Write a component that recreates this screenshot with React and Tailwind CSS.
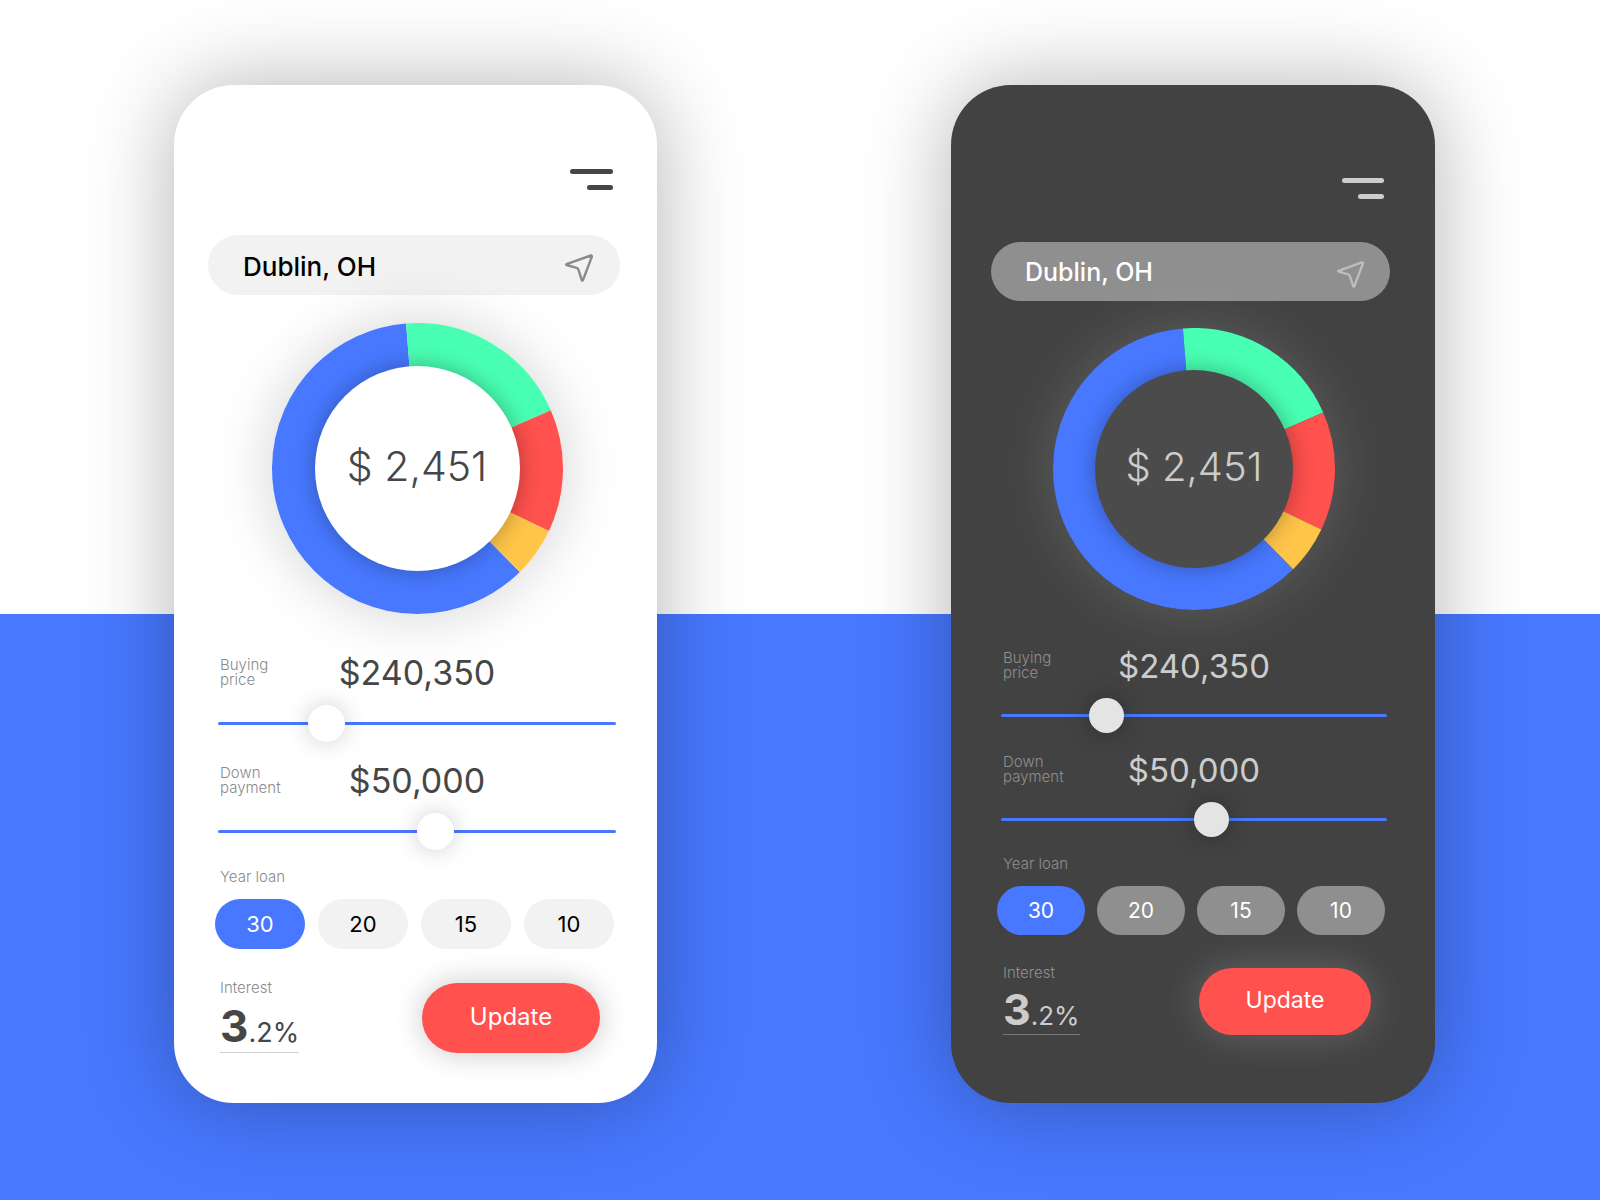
import { useState } from 'react'

const years = [30, 20, 15, 10]

// start and length are in degrees, clockwise from twelve o'clock
const slices = [
  { start: 135.3, length: 220.2, color: '#4778ff' },
  { start: -4.5, length: 70.9, color: '#49ffb3' },
  { start: 66.4, length: 49, color: '#ff514d' },
  { start: 115.4, length: 19.9, color: '#ffc549' },
]

const light = {
  card: 'max-w-[483px] bg-white pt-[84px] pb-[50px]',
  menu: 'mr-[44px]',
  barLong: 'w-[43px] bg-[#464646]',
  barShort: 'w-[26px] bg-[#464646]',
  search: 'mt-[45px] ml-[34px] mr-[37px] h-[60px] bg-[#f2f2f2] pl-[35px] pr-[27px]',
  searchText: 'text-[26px] text-black',
  searchIcon: 'h-[28px] w-[28px] text-[#8a8a8a]',
  body: 'ml-[44px] mr-[41px]',
  donut: 'mt-[28px] h-[291px] w-[291px] shadow-[0_0_60px_rgba(0,0,0,0.18)]',
  hole: 'h-[205px] w-[205px] bg-white shadow-[0_0_22px_rgba(0,0,0,0.3)]',
  total: 'text-[41px] text-[#464646]',
  firstField: 'mt-[37px]',
  nextField: 'mt-[18px]',
  label: 'text-[15px] leading-[15px] text-[#8a8a8a]',
  value: 'text-[34px] text-[#464646]',
  slider:
    'mt-[10px] h-[36px] [&::-webkit-slider-thumb]:-mt-[17px] [&::-webkit-slider-thumb]:h-[37px] [&::-webkit-slider-thumb]:w-[37px] [&::-webkit-slider-thumb]:bg-white [&::-webkit-slider-thumb]:shadow-[0_0_24px_rgba(0,0,0,0.2)]',
  years: 'mt-[20px]',
  pills: 'mt-[15px] ml-[41px] mr-[43px] gap-[13px]',
  pill: 'h-[50px] text-[22px]',
  pillIdle: 'bg-[#f2f2f2] text-black',
  footer: 'mt-[31px] pr-[16px]',
  rate: 'mt-[9px] border-[#d0d0d0] text-[#464646]',
  rateWhole: 'text-[44px] leading-[44px]',
  rateRest: 'text-[27px]',
  update: 'h-[70px] w-[178px] text-[24px] shadow-[0_0_30px_rgba(0,0,0,0.22)]',
}

const dark = {
  card: 'max-w-[484px] bg-[#424242] pt-[93px] pb-[68px]',
  menu: 'mr-[51px]',
  barLong: 'w-[42px] bg-[#cccccc]',
  barShort: 'w-[26px] bg-[#cccccc]',
  search: 'mt-[43px] ml-[40px] mr-[45px] h-[59px] bg-[#8f8f8f] pl-[34px] pr-[26px]',
  searchText: 'text-[25px] text-white',
  searchIcon: 'h-[27px] w-[27px] text-[#bdbdbd]',
  body: 'ml-[50px] mr-[48px]',
  donut: 'mt-[27px] h-[282px] w-[282px] shadow-[0_0_60px_rgba(255,255,255,0.16)]',
  hole: 'h-[198px] w-[198px] bg-[#4b4b4b] shadow-[0_0_22px_rgba(0,0,0,0.3)]',
  total: 'text-[40px] text-[#cccccc]',
  firstField: 'mt-[34px]',
  nextField: 'mt-[15px]',
  label: 'text-[15px] leading-[15px] text-[#8f8f8f]',
  value: 'text-[33px] text-[#cccccc]',
  slider:
    'mt-[10px] h-[35px] [&::-webkit-slider-thumb]:-mt-[16px] [&::-webkit-slider-thumb]:h-[35px] [&::-webkit-slider-thumb]:w-[35px] [&::-webkit-slider-thumb]:bg-[#e4e4e4] [&::-webkit-slider-thumb]:shadow-[0_0_24px_rgba(0,0,0,0.3)]',
  years: 'mt-[19px]',
  pills: 'mt-[15px] ml-[46px] mr-[50px] gap-[12px]',
  pill: 'h-[49px] text-[21px]',
  pillIdle: 'bg-[#8f8f8f] text-white',
  footer: 'mt-[30px] pr-[16px]',
  rate: 'mt-[8px] border-[#777777] text-[#cccccc]',
  rateWhole: 'text-[43px] leading-[42px]',
  rateRest: 'text-[26px]',
  update: 'h-[67px] w-[172px] text-[23px] shadow-[0_0_40px_rgba(255,255,255,0.2)]',
}

function Donut({ theme }) {
  return (
    <div className={`mx-auto grid place-items-center rounded-full ${theme.donut}`}>
      <svg viewBox="0 0 290 290" className="col-start-1 row-start-1 h-full w-full" aria-hidden="true">
        {slices.map((slice) => (
          <circle
            key={slice.color}
            cx="145"
            cy="145"
            r="120"
            fill="none"
            stroke={slice.color}
            strokeWidth="50"
            pathLength="360"
            strokeDasharray={`${slice.length} ${360 - slice.length}`}
            transform={`rotate(${slice.start - 90} 145 145)`}
          />
        ))}
      </svg>
      <div className={`col-start-1 row-start-1 grid place-items-center rounded-full pb-1 ${theme.hole}`}>
        <span className={`font-light ${theme.total}`}>$ 2,451</span>
      </div>
    </div>
  )
}

function SliderField({ id, label, amount, position, theme, spacing }) {
  const [value, setValue] = useState(position)

  return (
    <div className={spacing}>
      <div className="grid grid-cols-[1fr_auto_1fr] items-end">
        <label htmlFor={id} className={`w-min pb-2 pl-0.5 font-light ${theme.label}`}>
          {label}
        </label>
        <output htmlFor={id} className={`leading-[44px] ${theme.value}`}>
          {amount}
        </output>
      </div>
      <input
        id={id}
        type="range"
        min="0"
        max="100"
        value={value}
        onChange={(event) => setValue(Number(event.target.value))}
        className={`block w-full cursor-pointer appearance-none bg-transparent [&::-webkit-slider-runnable-track]:h-[3px] [&::-webkit-slider-runnable-track]:rounded-full [&::-webkit-slider-runnable-track]:bg-[#4778ff] [&::-webkit-slider-thumb]:appearance-none [&::-webkit-slider-thumb]:rounded-full ${theme.slider}`}
      />
    </div>
  )
}

function LoanCard({ name, theme }) {
  const [city, setCity] = useState('Dublin, OH')
  const [year, setYear] = useState(30)

  return (
    <section className={`w-full rounded-[60px] shadow-[0_0_88px_rgba(0,0,0,0.3)] ${theme.card}`}>
      <div className="flex justify-end">
        <button
          type="button"
          aria-label="Menu"
          className={`flex flex-col items-end gap-[11px] ${theme.menu}`}
        >
          <span className={`h-[5px] rounded-full ${theme.barLong}`} />
          <span className={`h-[5px] rounded-full ${theme.barShort}`} />
        </button>
      </div>

      <div className={`flex items-center rounded-full pt-0.5 ${theme.search}`}>
        <input
          type="text"
          aria-label="City"
          value={city}
          onChange={(event) => setCity(event.target.value)}
          className={`min-w-0 flex-1 bg-transparent font-medium outline-none ${theme.searchText}`}
        />
        <button type="button" aria-label="Use my location" className="pt-1">
          <svg
            viewBox="0 0 28 28"
            fill="none"
            stroke="currentColor"
            strokeWidth="2.4"
            strokeLinejoin="round"
            className={theme.searchIcon}
          >
            <path d="M25.9 1.5 L1.5 10.2 Q0.9 10.7 1.6 11 L11.6 13.9 Q13 14.4 13.4 15.6 L16.8 26.2 Q17.4 27 17.9 26.2 L26.9 2.6 Q27 1.4 25.9 1.5 Z" />
          </svg>
        </button>
      </div>

      <div className={theme.body}>
        <Donut theme={theme} />
        <SliderField
          id={`${name}-price`}
          label="Buying price"
          amount="$240,350"
          position={25}
          theme={theme}
          spacing={theme.firstField}
        />
        <SliderField
          id={`${name}-payment`}
          label="Down payment"
          amount="$50,000"
          position={55}
          theme={theme}
          spacing={theme.nextField}
        />
        <h2 id={`${name}-years`} className={`pl-0.5 font-light ${theme.years} ${theme.label}`}>
          Year loan
        </h2>
      </div>

      <div role="group" aria-labelledby={`${name}-years`} className={`grid grid-cols-4 ${theme.pills}`}>
        {years.map((item) => (
          <button
            key={item}
            type="button"
            aria-pressed={item === year}
            onClick={() => setYear(item)}
            className={`rounded-full ${theme.pill} ${
              item === year ? 'bg-[#4778ff] text-white' : theme.pillIdle
            }`}
          >
            {item}
          </button>
        ))}
      </div>

      <div className={theme.body}>
        <div className={`flex items-end justify-between pl-0.5 ${theme.footer}`}>
          <div>
            <h2 className={`font-light ${theme.label}`}>Interest</h2>
            <p className={`flex items-baseline border-b pb-1 ${theme.rate}`}>
              <span className={`font-bold ${theme.rateWhole}`}>3</span>
              <span className={`leading-none ${theme.rateRest}`}>.2%</span>
            </p>
          </div>
          <button type="button" className={`rounded-full bg-[#ff514d] pb-0.5 text-white ${theme.update}`}>
            Update
          </button>
        </div>
      </div>
    </section>
  )
}

function App() {
  return (
    <main className="flex min-h-screen flex-wrap items-start justify-between gap-y-20 bg-[linear-gradient(to_bottom,#ffffff_614px,#4778ff_614px)] pt-[85px] pr-[165px] pb-[97px] pl-[174px] font-['Inter',sans-serif]">
      <LoanCard name="light" theme={light} />
      <LoanCard name="dark" theme={dark} />
    </main>
  )
}

export default App
